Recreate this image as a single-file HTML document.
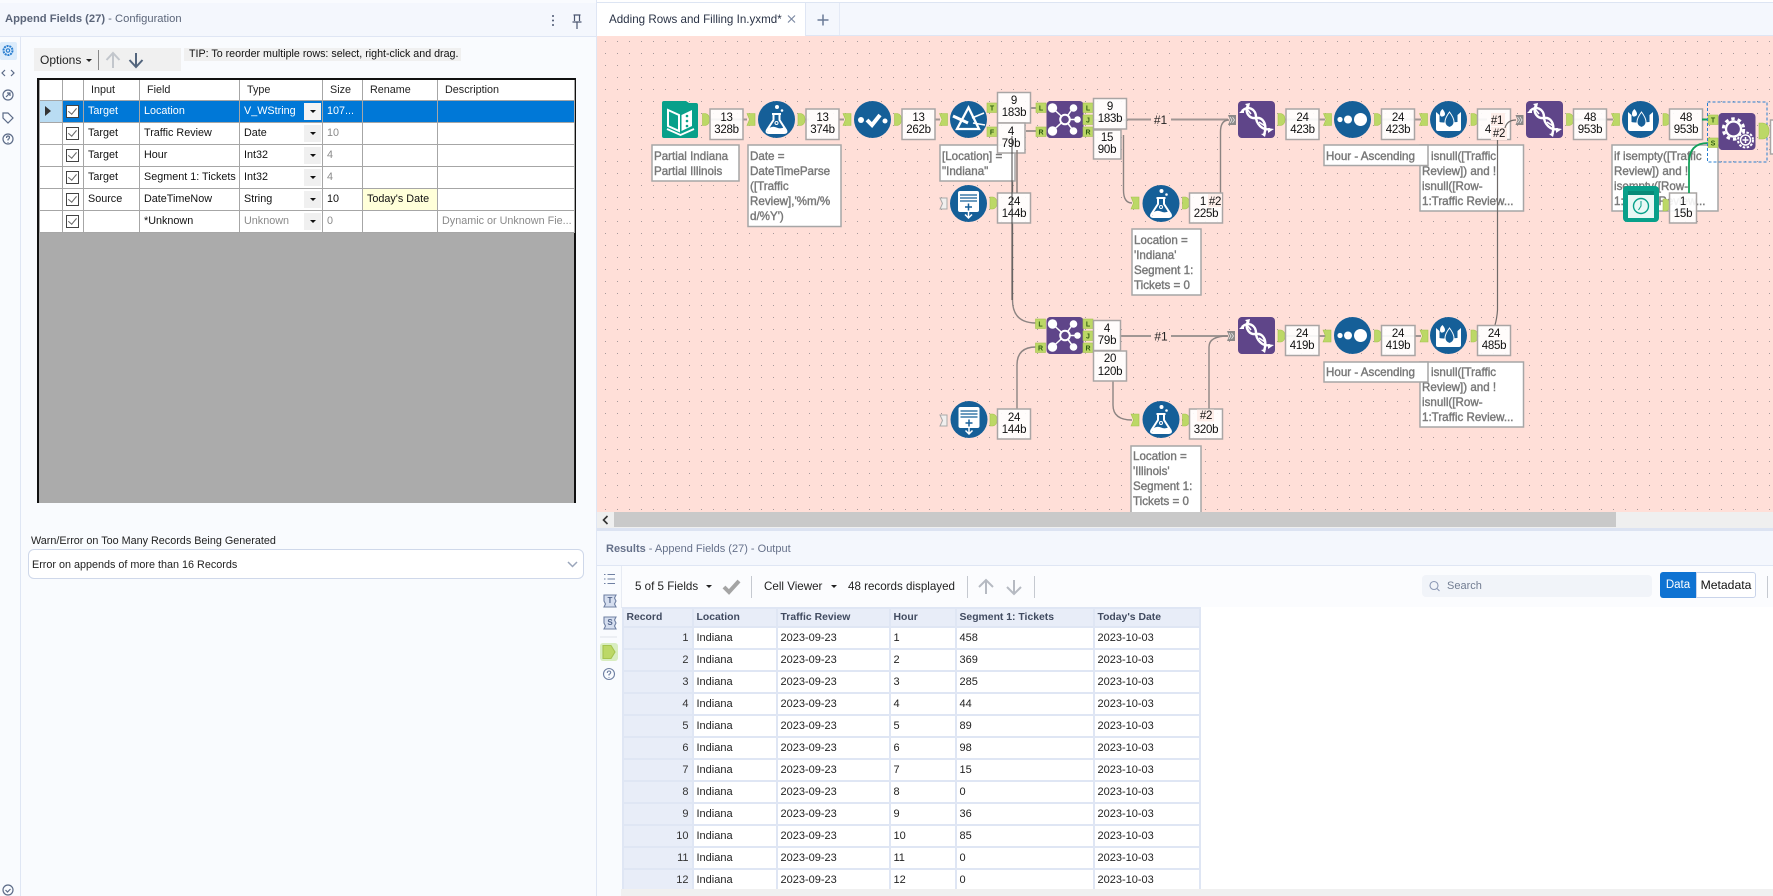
<!DOCTYPE html>
<html><head><meta charset="utf-8"><title>Append Fields</title>
<style>
html,body{margin:0;padding:0;width:1773px;height:896px;overflow:hidden;background:#fff;font-family:"Liberation Sans",sans-serif;color:#111}
.a{position:absolute}
#left{left:0;top:0;width:596px;height:896px;background:#f9fbfe}
#side{left:0;top:37px;width:20px;height:859px;background:#f9fbfe;border-right:1px solid #dfe6f4}
.hdr{background:#f4f7fd}
#grid{left:37px;top:78px;width:535px;height:423px;background:#ababab;border:1px solid #111;border-width:2px 2px 0 2px}
#grid table{border-collapse:collapse;table-layout:fixed;width:535px;font-size:10.8px}
#grid td{border:1px solid #a6a6a6;height:22px;padding:0 0 0 4px;background:#fff;white-space:nowrap;overflow:hidden;position:relative;box-sizing:border-box}
#grid tr.h td{height:20px;padding-left:7px;border-top:0;color:#222}
#grid tr.s td{background:#0078d7;color:#fff}
#grid td.g{color:#8a8a8a}
.cb{display:block;width:11px;height:11px;border:1px solid #444;background:#fff;margin-left:1px;position:relative}
.cb:after{content:"";position:absolute;left:3px;top:0;width:3.5px;height:7px;border:solid #666;border-width:0 1.2px 1.2px 0;transform:rotate(40deg)}
.dd{position:absolute;right:1px;top:2px;width:17px;height:17px;background:#f0f0f0}
.dd:after{content:"";position:absolute;left:6px;top:7px;border:3px solid transparent;border-top:3.5px solid #111}
#res table{border-collapse:collapse;table-layout:fixed;width:577px;font-size:11px}
#res td{border:2px solid #dfe6f4;height:22px;box-sizing:border-box;padding:0 0 0 3px;background:#fff;white-space:nowrap;color:#222}
#res tr.h td{height:19px;background:#e8edf8;font-weight:bold;color:#414b60;font-size:10.4px;padding-left:3px}
#res td.n{background:#e8edf8;text-align:right;padding-right:3px;color:#333}
svg text{font-family:"Liberation Sans",sans-serif}
.b{fill:#fff;fill-opacity:.9;stroke:#a9a5a4;stroke-width:1.5}
.t{font-size:11.5px;text-anchor:middle;fill:#111;letter-spacing:-.25px}
.n{fill:#fff;stroke:#a6a6a6;stroke-width:1.5}
.l{font-size:11.6px;fill:#787878;stroke:#787878;stroke-width:.4px}
.c{fill:none;stroke:#a09693;stroke-width:2}
.e{fill:none;stroke:#8c8482;stroke-width:1.4}
.d{fill:none;stroke:#6f6a68;stroke-width:1.2}
.k{font-size:7px;font-weight:bold;fill:#2f5d12;text-anchor:middle}
</style></head><body>

<div class="a" style="left:0;top:0;width:1773px;height:3px;background:#fff;border-bottom:1px solid #dde5f3;box-sizing:border-box"></div>
<div class="a" id="left"></div>
<div class="a hdr" style="left:0;top:3px;width:596px;height:33px;border-bottom:1px solid #dfe6f4"></div>
<div class="a" style="left:5px;top:13px;font-size:11.2px;color:#5b6579;white-space:nowrap"><b>Append Fields (27)</b> - Configuration</div>
<svg class="a" style="left:546px;top:12px" width="40" height="18"><g fill="#4a5670"><circle cx="7" cy="4" r="1"/><circle cx="7" cy="8.500" r="1"/><circle cx="7" cy="13" r="1"/></g><path d="M27.500 3h7M28.500 3v6M33.500 3v6M26.500 10h9M31 10v7" fill="none" stroke="#4a5670" stroke-width="1.200"/></svg>
<div class="a" style="left:596px;top:0;width:1px;height:896px;background:#dfe6f4"></div>

<div class="a" id="side"></div>
<div class="a" style="left:0;top:42px;width:17px;height:18px;background:#dcecfb;border-radius:2px"></div>
<svg class="a" style="left:0;top:40px" width="20" height="110" fill="none" stroke="#5c6b87" stroke-width="1.200">
<circle cx="8" cy="10.500" r="4.500" stroke="#2a7fd0" stroke-width="2" stroke-dasharray="2 .8"/><circle cx="8" cy="10.500" r="1.700" stroke="#2a7fd0"/>
<path d="M5 30l-3 3 3 3M11 30l3 3-3 3"/>
<circle cx="8" cy="55" r="5"/><path d="M6 57l4-4M7 53h3v3"/>
<path d="M3 73h5l5 5-5 5-5-5z"/>
<circle cx="8" cy="99" r="5"/><path d="M6.500 98q0-2 1.500-2t1.500 1.500q0 1-1.500 2v1M8 102v.8"/>
</svg>
<svg class="a" style="left:0;top:882px" width="20" height="14" fill="none" stroke="#5c6b87" stroke-width="1.200"><circle cx="8" cy="8" r="5"/><path d="M5.500 8l2 2 3-3"/></svg>

<div class="a" style="left:34px;top:48px;width:147px;height:23px;background:#f0f0f0"></div>
<div class="a" style="left:40px;top:53px;font-size:12px;color:#222">Options</div>
<div class="a" style="left:86px;top:59px;border:3px solid transparent;border-top:3.5px solid #222"></div>
<div class="a" style="left:98px;top:50px;width:1px;height:20px;background:#888"></div>
<svg class="a" style="left:104px;top:50px" width="42" height="20" fill="none" stroke-width="2"><path d="M9 18V4M2.500 10L9 3l6.500 7" stroke="#c2c6cc"/><path d="M32 3v14M25.500 10L32 17l6.500-7" stroke="#53657d"/></svg>
<div class="a" style="left:184px;top:48px;width:277px;height:13px;background:#f0f0f0;font-size:10.7px;line-height:13px;padding-left:5px;box-sizing:border-box;white-space:nowrap">TIP: To reorder multiple rows: select, right-click and drag.</div>

<div class="a" id="grid"><table>
<colgroup><col style="width:23px"><col style="width:21px"><col style="width:56px"><col style="width:100px"><col style="width:83px"><col style="width:40px"><col style="width:75px"><col style="width:137px"></colgroup>
<tr class="h"><td></td><td></td><td>Input</td><td>Field</td><td>Type</td><td>Size</td><td>Rename</td><td>Description</td></tr>
<tr class="s"><td style="background:#b9dcf3"><span style="display:block;width:0;height:0;border:5px solid transparent;border-left:6px solid #333;margin:0 0 0 1px"></span></td><td style="padding-left:2px"><span class="cb"></span></td><td>Target</td><td>Location</td><td>V_WString<span class="dd" style="background:#f4f4f4"></span></td><td>107...</td><td></td><td></td></tr>
<tr><td></td><td style="padding-left:2px"><span class="cb"></span></td><td>Target</td><td>Traffic Review</td><td>Date<span class="dd"></span></td><td class="g">10</td><td></td><td></td></tr>
<tr><td></td><td style="padding-left:2px"><span class="cb"></span></td><td>Target</td><td>Hour</td><td>Int32<span class="dd"></span></td><td class="g">4</td><td></td><td></td></tr>
<tr><td></td><td style="padding-left:2px"><span class="cb"></span></td><td>Target</td><td>Segment 1: Tickets</td><td>Int32<span class="dd"></span></td><td class="g">4</td><td></td><td></td></tr>
<tr><td></td><td style="padding-left:2px"><span class="cb"></span></td><td>Source</td><td>DateTimeNow</td><td>String<span class="dd"></span></td><td>10</td><td style="background:#ffffd9">Today's Date</td><td></td></tr>
<tr><td></td><td style="padding-left:2px"><span class="cb"></span></td><td></td><td>*Unknown</td><td class="g">Unknown<span class="dd"></span></td><td class="g">0</td><td></td><td class="g">Dynamic or Unknown Fie...</td></tr>
</table></div>

<div class="a" style="left:31px;top:535px;font-size:10.8px;color:#222;white-space:nowrap">Warn/Error on Too Many Records Being Generated</div>
<div class="a" style="left:28px;top:549px;width:556px;height:30px;background:#fff;border:1px solid #cfd8ea;border-radius:6px;box-sizing:border-box;font-size:10.8px;line-height:30px;padding-left:3px;color:#222">Error on appends of more than 16 Records</div>
<svg class="a" style="left:566px;top:560px" width="14" height="10" fill="none" stroke="#9aa6bb" stroke-width="1.500"><path d="M2 2l4.500 4.500L11 2"/></svg>

<!-- tab bar -->
<div class="a hdr" style="left:597px;top:3px;width:1176px;height:32.500px;border-bottom:1px solid #dfe6f4;box-sizing:border-box"></div>
<div class="a" style="left:597px;top:3px;width:209px;height:33px;background:#fff;border-right:1px solid #dfe6f4;box-sizing:border-box"></div>
<div class="a" style="left:839px;top:3px;width:1px;height:32px;background:#e4eaf6"></div>
<div class="a" style="left:609px;top:13px;font-size:11.600px;color:#2a3346;white-space:nowrap">Adding Rows and Filling In.yxmd*</div>
<svg class="a" style="left:786px;top:13px" width="50" height="14" fill="none" stroke="#7d8aa3" stroke-width="1.200"><path d="M2 2.500l7 7M9 2.500l-7 7"/><path d="M37 1.500v11M31.500 7h11" stroke-width="1.500" stroke="#6a7a96"/></svg>

<!-- canvas -->
<div class="a" style="left:597px;top:35.500px;width:1176px;height:476px;background-color:#ffdfd8"></div>

<svg class="a" style="left:0;top:0" width="1773" height="512" viewBox="0 0 1773 512">
<defs>
<pattern id="dots" x="5" y="5" width="12" height="12" patternUnits="userSpaceOnUse"><rect width="1" height="1" fill="#a5989a"/></pattern>
<path id="o" d="M0 0h3q4 1 4 6t-4 6H0z" fill="#bcd866" stroke="#a5c44f" stroke-width=".6"/>
<path id="i" d="M0 0h8v12H0l2.500-6z" fill="#bcd866" stroke="#a5c44f" stroke-width=".6"/>
<rect id="k" width="10" height="9.500" fill="#bcd866" stroke="#a5c44f" stroke-width=".6"/>
<g id="stub"><path d="M0 0h8v10H0l2-5z" fill="#8d8a89"/><path d="M2 2l2 3-2 3M4.500 2l2 3-2 3" fill="none" stroke="#e5e5e5" stroke-width=".8"/></g>
<path id="ls" d="M0 0h7v11H0l2.500-5.500z" fill="#f1efee" stroke="#a8a8a8"/>
<g id="flask"><circle cx="18.500" cy="18.500" r="18.500" fill="#155f98"/><path d="M15.500 13v6L9 29q-1.500 3 2 3h15q3.500 0 2-3l-6.500-10v-6M14 13h9" fill="none" stroke="#fff" stroke-width="2"/><path d="M10.500 27.500q4-3 8-1t8-.5l1.500 3q.5 2-1.500 2H11q-2 0-1.500-2z" fill="#fff"/><circle cx="19" cy="6" r="2" fill="#fff"/><circle cx="24" cy="9.500" r="1.300" fill="#fff"/><circle cx="18.500" cy="22" r="1.500" fill="none" stroke="#fff"/></g>
<g id="check"><circle cx="18.500" cy="18.500" r="18.500" fill="#155f98"/><circle cx="7" cy="19" r="3" fill="#fff"/><path d="M13 19l5 5 8-10" fill="none" stroke="#fff" stroke-width="4"/><circle cx="31" cy="20" r="2.500" fill="#fff"/></g>
<g id="filter"><circle cx="18.500" cy="18.500" r="18.500" fill="#155f98"/><path d="M18.500 6.500L29 28H7z" fill="none" stroke="#fff" stroke-width="2.300"/><path d="M3 15l15 7" stroke="#fff" stroke-width="3"/><path d="M22 17l12-5M23 22l12 2" stroke="#fff" stroke-width="1.600"/></g>
<g id="input"><circle cx="18.500" cy="18.500" r="18.500" fill="#155f98"/><rect x="8" y="6" width="21" height="21" rx="2" fill="#fff"/><path d="M10 10h17M10 13h17M10 16h17" stroke="#155f98" stroke-width="1.300"/><path d="M18.500 18.500v7M15 22h7" stroke="#155f98" stroke-width="1.500"/><path d="M18.500 26v7M15 29.500l3.500 3.500 3.500-3.500" fill="none" stroke="#fff" stroke-width="1.500"/></g>
<g id="join"><rect width="37" height="37" rx="4" fill="#5f4589"/><path d="M18.500 18.500L6 7M18.500 18.500L6 30M18.500 18.500L27 6M18.500 18.500h13M18.500 18.500L27 30" stroke="#fff" stroke-width="1.500"/><circle cx="18.500" cy="18.500" r="4.800" fill="#5f4589" stroke="#fff" stroke-width="2"/><circle cx="6" cy="7" r="4.700" fill="#fff"/><circle cx="6" cy="30" r="4.700" fill="#fff"/><circle cx="27" cy="7" r="3.800" fill="#fff"/><circle cx="31" cy="18.500" r="3.300" fill="#fff"/><circle cx="27" cy="30" r="3.800" fill="#fff"/></g>
<g id="dna"><rect width="37" height="37" rx="4" fill="#5f4589"/><path d="M4 10C10 4 18 8 18 16C18 22 24 30 32 28" fill="none" stroke="#fff" stroke-width="2.400"/><path d="M10 4C6 12 12 18 18 17C24 16 30 22 26 34" fill="none" stroke="#fff" stroke-width="2.400"/><path d="M9 8L13 13M21 21L27 25" stroke="#fff" stroke-width="1.600"/><path d="M1 12l5-5v5zM36 28l-6 4v-5zM7 3l5-1-1 5zM27 36l-4-3 5-1z" fill="#fff"/></g>
<g id="sort"><circle cx="18.500" cy="18.500" r="18.500" fill="#155f98"/><circle cx="6" cy="18.500" r="2.600" fill="#fff"/><circle cx="14" cy="18.500" r="4" fill="#fff"/><circle cx="26.500" cy="18.500" r="6.500" fill="#fff"/></g>
<g id="water"><circle cx="18.500" cy="18.500" r="18.500" fill="#155f98"/><path d="M6 11l3.500 3v7q3 1 18 0v-7l3.500-3v17q0 2-2 2H8q-2 0-2-2z" fill="#fff"/><path d="M19.500 11q4.500 6 4.500 10t-4.500 5.500Q15 25 15 21t4.500-10z" fill="#155f98" stroke="#fff" stroke-width="1"/><path d="M12.500 8q2.500 3 2.500 5t-2.500 2.500T10 13t2.500-5z" fill="#fff"/></g>
<g id="append"><rect width="37" height="37" rx="4" fill="#5f4589"/><circle cx="15" cy="16" r="10.200" fill="none" stroke="#fff" stroke-width="3" stroke-dasharray="3.500 3"/><circle cx="15" cy="16" r="7.500" fill="none" stroke="#fff" stroke-width="2.300"/><circle cx="27" cy="27" r="7.500" fill="#5f4589" stroke="#fff" stroke-width="2" stroke-dasharray="2.500 1.500"/><circle cx="27" cy="27" r="5" fill="none" stroke="#fff" stroke-width="1.500"/><path d="M27 24v6M24 27h6" stroke="#fff" stroke-width="1.500"/></g>
<g id="book"><path d="M2 0h22l3 2h7q2 0 2 2v31q0 2-2 2H2q-2 0-2-2V2q0-2 2-2z" fill="#08a08a"/><path d="M6 9l11 5v16L6 25z" fill="none" stroke="#fff" stroke-width="2"/><path d="M19.500 14L30 9v16l-10.500 5z" fill="#fff"/><circle cx="25" cy="15" r="1.300" fill="#08a08a"/><circle cx="25" cy="20" r="1.300" fill="#08a08a"/><circle cx="25" cy="25" r="1.300" fill="#08a08a"/><path d="M5 28l13.500 6L32 28" fill="none" stroke="#fff" stroke-width="1.800"/></g>
<g id="clock"><rect width="36" height="36" rx="4" fill="#08a08a"/><rect x="5" y="5" width="26" height="27" fill="#e9f8f5"/><rect x="5" y="5" width="26" height="4" fill="#078a78"/><circle cx="18" cy="20" r="7.500" fill="none" stroke="#08a08a" stroke-width="1.400"/><path d="M18 15v5l-2.500 4" fill="none" stroke="#08a08a"/></g>
</defs>
<rect x="597" y="36" width="1176" height="476" fill="url(#dots)"/>

<!-- connections -->
<path class="c" d="M709 119.500h38M839 119.500h5M805 119.500h4M934 119.500h6M1030 108h7M1026 131h10M1093 120h35M1127 119.500h24M1171 119.500h57M1285 119.500h40M1381 119.500h40M1477 119.500h10M1573 119.500h40M1119 336h32M1171 336h57M1285 336h40M1381 336h40M1477 336h3M990 203h8M1182 203h8M1182 420h8"/>
<path class="e" d="M1123.500 135V190Q1123.500 203 1132 203"/>
<path class="e" d="M1113 381V405Q1113 420 1132 420"/>
<path class="e" d="M1017 409V365Q1017 347 1036 347"/>
<path class="e" d="M1209 409V347Q1209 336 1228 336"/>
<path class="e" d="M1012.500 150V300Q1012.500 323 1036 323"/>
<path class="e" d="M1220.500 193V132Q1220.500 120 1229 120"/>

<!-- annotations -->
<rect class="n" x="652" y="145" width="87" height="36"/>
<text class="l" x="654" y="160">Partial Indiana</text><text class="l" x="654" y="175">Partial Illinois</text>
<rect class="n" x="748" y="145" width="93" height="81.500"/>
<text class="l" x="750" y="160">Date =</text><text class="l" x="750" y="175">DateTimeParse</text><text class="l" x="750" y="190">([Traffic</text><text class="l" x="750" y="205">Review],'%m/%</text><text class="l" x="750" y="220">d/%Y')</text>
<rect class="n" x="940" y="145" width="75" height="36"/>
<text class="l" x="942" y="160">[Location] =</text><text class="l" x="942" y="175">"Indiana"</text>
<rect class="n" x="1132" y="229" width="69" height="66"/>
<text class="l" x="1134" y="244">Location =</text><text class="l" x="1134" y="259">'Indiana'</text><text class="l" x="1134" y="274">Segment 1:</text><text class="l" x="1134" y="289">Tickets = 0</text>
<rect class="n" x="1131" y="446" width="70" height="70"/>
<text class="l" x="1133" y="460">Location =</text><text class="l" x="1133" y="475">'Illinois'</text><text class="l" x="1133" y="490">Segment 1:</text><text class="l" x="1133" y="505">Tickets = 0</text>
<rect class="n" x="1420" y="145" width="103.500" height="66"/>
<text class="l" x="1422" y="160">if isnull([Traffic</text><text class="l" x="1422" y="175">Review]) and !</text><text class="l" x="1422" y="190">isnull([Row-</text><text class="l" x="1422" y="205">1:Traffic Review...</text>
<rect class="n" x="1324" y="145" width="104" height="20.500"/><text class="l" x="1326" y="160">Hour - Ascending</text>
<rect class="n" x="1420" y="362" width="103.500" height="65"/>
<text class="l" x="1422" y="376">if isnull([Traffic</text><text class="l" x="1422" y="391">Review]) and !</text><text class="l" x="1422" y="406">isnull([Row-</text><text class="l" x="1422" y="421">1:Traffic Review...</text>
<rect class="n" x="1324" y="362" width="104" height="20"/><text class="l" x="1326" y="376">Hour - Ascending</text>
<rect class="n" x="1612" y="145" width="106" height="66"/>
<text class="l" x="1614" y="160">if isempty([Traffic</text><text class="l" x="1614" y="175">Review]) and !</text><text class="l" x="1614" y="190">isempty([Row-</text><text class="l" x="1614" y="205">1:Traffic Review...</text>

<!-- row 1 -->
<use href="#book" x="662" y="101"/><use href="#o" x="702.500" y="113.500"/>
<rect class="b" x="710" y="109" width="33" height="30.500"/><text class="t" x="726.500" y="121">13</text><text class="t" x="726.500" y="133">328b</text>
<use href="#i" x="747" y="113.500"/><use href="#flask" x="758" y="101"/><use href="#o" x="798" y="113.500"/>
<rect class="b" x="806" y="109" width="33" height="30.500"/><text class="t" x="822.500" y="121">13</text><text class="t" x="822.500" y="133">374b</text>
<use href="#i" x="843" y="113.500"/><use href="#check" x="854" y="101"/><use href="#o" x="894.500" y="113.500"/>
<rect class="b" x="902" y="109" width="33" height="30.500"/><text class="t" x="918.500" y="121">13</text><text class="t" x="918.500" y="133">262b</text>
<use href="#i" x="939.500" y="113.500"/><use href="#filter" x="950" y="101"/>
<use href="#k" x="987" y="103"/><text class="k" x="992" y="110.500">T</text>
<use href="#k" x="987" y="127"/><text class="k" x="992" y="134.500">F</text>
<rect class="b" x="997.500" y="92.500" width="33" height="30.500"/><text class="t" x="1014" y="104">9</text><text class="t" x="1014" y="116">183b</text>
<rect class="b" x="997.500" y="123" width="27.500" height="30"/><text class="t" x="1011" y="135">4</text><text class="t" x="1011" y="147">79b</text>
<use href="#k" x="1036" y="103"/><text class="k" x="1041" y="110.500">L</text>
<use href="#k" x="1036" y="127"/><text class="k" x="1041" y="134.500">R</text>
<use href="#join" x="1046.500" y="101"/>
<use href="#k" x="1083" y="103"/><text class="k" x="1088" y="110.500">L</text>
<use href="#k" x="1083" y="115"/><text class="k" x="1088" y="122.500">J</text>
<use href="#k" x="1083" y="127"/><text class="k" x="1088" y="134.500">R</text>
<rect class="b" x="1093.500" y="98.500" width="33" height="30.500"/><text class="t" x="1110" y="110">9</text><text class="t" x="1110" y="122">183b</text>
<rect class="b" x="1093.500" y="130" width="27.500" height="29"/><text class="t" x="1107" y="141">15</text><text class="t" x="1107" y="153">90b</text>
<text x="1160.500" y="124" font-size="12" text-anchor="middle" fill="#222">#1</text>
<!-- row 2 filter -->
<use href="#ls" x="940" y="198"/><use href="#input" x="950" y="185"/><use href="#o" x="990" y="197"/>
<rect class="b" x="997.500" y="193" width="33" height="30"/><text class="t" x="1014" y="205">24</text><text class="t" x="1014" y="217">144b</text>
<path d="M1012 136V300" fill="none" stroke="#444" stroke-width="1"/><path d="M1017 150V193" fill="none" stroke="#8a807d" stroke-width="1.500"/>
<use href="#i" x="1131" y="197"/><use href="#flask" x="1142.500" y="185"/><use href="#o" x="1182.500" y="197"/>
<rect class="b" x="1189.500" y="193" width="33" height="30"/><text class="t" x="1203" y="205">1</text><rect x="1208" y="194" width="14" height="13" fill="#fdeee9"/><text class="t" x="1215" y="205">#2</text><text class="t" x="1206" y="217">225b</text>
<use href="#stub" x="1228" y="115"/><use href="#dna" x="1238" y="101"/><use href="#o" x="1278" y="113.500"/>
<rect class="b" x="1286" y="109" width="33" height="30.500"/><text class="t" x="1302.500" y="121">24</text><text class="t" x="1302.500" y="133">423b</text>
<use href="#i" x="1323.500" y="113.500"/><use href="#sort" x="1334" y="101"/><use href="#o" x="1374.500" y="113.500"/>
<rect class="b" x="1381.500" y="109" width="33" height="30.500"/><text class="t" x="1398" y="121">24</text><text class="t" x="1398" y="133">423b</text>
<use href="#i" x="1419.500" y="113.500"/><use href="#water" x="1430" y="101"/><use href="#o" x="1471" y="113.500"/>
<rect class="b" x="1477.500" y="109" width="33" height="30.500"/><text class="t" x="1488" y="133">4</text>
<rect x="1491" y="113" width="14" height="13" fill="#fdeee9"/><rect x="1491" y="127" width="16" height="13" fill="#fdeee9"/>
<text class="t" x="1497" y="124">#1</text><text class="t" x="1499" y="137">#2</text>
<path d="M1505 128Q1507 120 1516 120" class="d"/>
<path d="M1497.500 140V310Q1497 318 1495 325" class="d"/>
<use href="#stub" x="1515.500" y="115"/><use href="#dna" x="1526" y="101"/><use href="#o" x="1566.500" y="113.500"/>
<rect class="b" x="1573.500" y="109" width="33" height="30.500"/><text class="t" x="1590" y="121">48</text><text class="t" x="1590" y="133">953b</text>
<use href="#i" x="1611.500" y="113.500"/><use href="#water" x="1622" y="101"/><use href="#o" x="1663" y="113.500"/>
<rect class="b" x="1669.500" y="109" width="33" height="30.500"/><text class="t" x="1686" y="121">48</text><text class="t" x="1686" y="133">953b</text>
<path d="M1702 119.500h7" stroke="#12a05a" stroke-width="2"/>
<use href="#clock" x="1623" y="186"/><use href="#o" x="1663" y="199"/>
<rect class="b" x="1669.500" y="193" width="27" height="30"/><text class="t" x="1683" y="205">1</text><text class="t" x="1683" y="217">15b</text>
<path d="M1689 193V163Q1689 143 1708 143" fill="none" stroke="#12a05a" stroke-width="1.800"/>
<use href="#k" x="1708" y="115"/><text class="k" x="1713" y="122.500">T</text>
<use href="#k" x="1708" y="138"/><text class="k" x="1713" y="145.500">S</text>
<use href="#append" x="1718.500" y="113"/>
<rect x="1707.500" y="102" width="59.500" height="60" fill="none" stroke="#2a7fd0" stroke-dasharray="3 2"/>
<path d="M1759 123h4q6 1 6 8t-6 8h-4z" fill="#bcd866" stroke="#a5c44f" stroke-width=".6"/>
<rect class="b" x="1770.500" y="120" width="10" height="34"/>

<!-- row 3 lower -->
<use href="#k" x="1035.500" y="319"/><text class="k" x="1040.500" y="326.500">L</text>
<use href="#k" x="1035.500" y="343"/><text class="k" x="1040.500" y="350.500">R</text>
<use href="#join" x="1046.500" y="317"/>
<use href="#k" x="1083" y="319"/><text class="k" x="1088" y="326.500">L</text>
<use href="#k" x="1083" y="331"/><text class="k" x="1088" y="338.500">J</text>
<use href="#k" x="1083" y="343"/><text class="k" x="1088" y="350.500">R</text>
<rect class="b" x="1093.500" y="320.500" width="27" height="30"/><text class="t" x="1107" y="332">4</text><text class="t" x="1107" y="344">79b</text>
<rect class="b" x="1093.500" y="351" width="33" height="30"/><text class="t" x="1110" y="362">20</text><text class="t" x="1110" y="375">120b</text>
<text x="1161" y="340.500" font-size="12" text-anchor="middle" fill="#222">#1</text>
<use href="#stub" x="1227" y="331"/><use href="#dna" x="1238" y="317"/><use href="#o" x="1278" y="330"/>
<rect class="b" x="1285.500" y="325.500" width="33.500" height="30"/><text class="t" x="1302" y="337">24</text><text class="t" x="1302" y="349">419b</text>
<use href="#i" x="1323" y="330"/><use href="#sort" x="1334" y="317"/><use href="#o" x="1374.500" y="330"/>
<rect class="b" x="1381.500" y="325.500" width="33.500" height="30"/><text class="t" x="1398" y="337">24</text><text class="t" x="1398" y="349">419b</text>
<use href="#i" x="1420" y="330"/><use href="#water" x="1430" y="317"/><use href="#o" x="1471" y="330"/>
<rect class="b" x="1477.500" y="325.500" width="33" height="30"/><text class="t" x="1494" y="337">24</text><text class="t" x="1494" y="349">485b</text>
<!-- row 4 -->
<use href="#ls" x="940" y="415"/><use href="#input" x="950.500" y="401"/><use href="#o" x="990" y="414"/>
<rect class="b" x="997.500" y="409" width="33" height="30"/><text class="t" x="1014" y="421">24</text><text class="t" x="1014" y="433">144b</text>
<use href="#i" x="1131" y="414"/><use href="#flask" x="1142.500" y="401"/><use href="#o" x="1182.500" y="414"/>
<rect class="b" x="1189.500" y="409" width="33" height="30"/><rect x="1197" y="409.500" width="17" height="12" fill="#fdeee9"/><text class="t" x="1206" y="419">#2</text><text class="t" x="1206" y="433">320b</text>
</svg>

<!-- scrollbar -->
<div class="a" style="left:597px;top:512px;width:1176px;height:16px;background:#efefef"></div>
<div class="a" style="left:614px;top:512px;width:1002px;height:15px;background:#c9c9c9"></div>
<svg class="a" style="left:601px;top:515px" width="10" height="10" fill="none" stroke="#333" stroke-width="1.600"><path d="M6.500 1L2.500 5l4 4"/></svg>
<div class="a" style="left:597px;top:528px;width:1176px;height:3px;background:#dce3f2"></div>

<!-- results -->
<div class="a" style="left:597px;top:531px;width:1176px;height:365px;background:#f9fbfe"></div>
<div class="a hdr" style="left:597px;top:531px;width:1176px;height:34px;border-bottom:1px solid #dfe6f4"></div>
<div class="a" style="left:606px;top:543px;font-size:11px;color:#66718a;white-space:nowrap"><b>Results</b> - Append Fields (27) - Output</div>
<div class="a" style="left:621px;top:566px;width:1152px;height:42px;background:#fbfcfe;border-bottom:1px solid #e7ebf3;border-left:1px solid #e7ebf3;box-sizing:border-box"></div>
<div class="a" style="left:635px;top:580px;font-size:11.600px;color:#222;white-space:nowrap">5 of 5 Fields</div>
<div class="a" style="left:706px;top:585px;border:3px solid transparent;border-top:3.500px solid #222"></div>
<svg class="a" style="left:722px;top:578px" width="20" height="18"><path d="M2 9l5 5L17 3" fill="none" stroke="#a4a4a4" stroke-width="4"/></svg>
<div class="a" style="left:751px;top:576px;width:1px;height:22px;background:#c5c9d0"></div>
<div class="a" style="left:764px;top:580px;font-size:11.600px;color:#222;white-space:nowrap">Cell Viewer</div>
<div class="a" style="left:831px;top:585px;border:3px solid transparent;border-top:3.500px solid #222"></div>
<div class="a" style="left:848px;top:580px;font-size:11.600px;color:#222;white-space:nowrap">48 records displayed</div>
<div class="a" style="left:967px;top:576px;width:1px;height:22px;background:#c5c9d0"></div>
<svg class="a" style="left:976px;top:578px" width="50" height="18" fill="none" stroke="#b6bac2" stroke-width="2"><path d="M10 16V2M3 9l7-7 7 7M38 2v14M31 9l7 7 7-7"/></svg>
<div class="a" style="left:1034px;top:576px;width:1px;height:22px;background:#c5c9d0"></div>
<div class="a" style="left:1422px;top:575px;width:230px;height:22px;background:#f1f4f9;border-radius:4px;font-size:11px;line-height:22px;padding-left:25px;box-sizing:border-box;color:#727d92">Search</div>
<svg class="a" style="left:1428px;top:580px" width="14" height="14" fill="none" stroke="#8c99b5" stroke-width="1.100"><circle cx="6" cy="5.500" r="4"/><path d="M9 8.500l2.500 2.500"/></svg>
<div class="a" style="left:1660px;top:572px;width:36px;height:26px;background:#0f73d2;border-radius:3px 0 0 3px;color:#fff;font-size:11.5px;line-height:26px;text-align:center">Data</div>
<div class="a" style="left:1696px;top:572px;width:60px;height:26px;background:#fff;border:1px solid #c9d4ea;box-sizing:border-box;border-radius:0 3px 3px 0;font-size:12.2px;line-height:24px;text-align:center;color:#111">Metadata</div>
<div class="a" style="left:1767px;top:576px;width:1px;height:22px;background:#c5c9d0"></div>

<div class="a" style="left:600px;top:643px;width:18px;height:18px;background:#d8edc0;border-radius:3px"></div>
<svg class="a" style="left:597px;top:568px" width="24" height="120" fill="none" stroke="#6f80a3" stroke-width="1.100">
<path d="M10.500 6.500h7.500M10.500 11h7.500M10.500 15.500h7.500"/><path d="M7 6.500h1.500M7 11h1.500M7 15.500h1.500"/>
<path d="M7 27h12l-1.500 3 1.500 3-1.500 3 1.500 3H7l1.500-3L7 33z" fill="#d5deef"/>
<path d="M7 49h12l-1.500 3 1.500 3-1.500 3 1.500 3H7l1.500-3L7 55z" fill="#d5deef"/>
<path d="M3 69h17" stroke="#dfe3ea"/>
<path d="M6 77.500h8l4 6.500-4 6.500H6z" fill="#bcd866" stroke="#a5c44f"/>
<circle cx="12" cy="106" r="5.500"/><path d="M10.300 105q0-2 1.700-2t1.700 1.500q0 1-1.700 2v1M12 109v.8"/>
</svg>
<div class="a" style="left:604px;top:596px;width:12px;text-align:center;font-size:8px;font-weight:bold;color:#52648a">T</div>
<div class="a" style="left:604px;top:618px;width:12px;text-align:center;font-size:8px;font-weight:bold;color:#52648a">S</div>

<div class="a" id="res" style="left:621.500px;top:607px;height:282px;overflow:hidden;background:#fff;width:1151px"><table>
<colgroup><col style="width:70px"><col style="width:84px"><col style="width:113px"><col style="width:66px"><col style="width:138px"><col style="width:106px"></colgroup>
<tr class="h"><td>Record</td><td>Location</td><td>Traffic Review</td><td>Hour</td><td>Segment 1: Tickets</td><td>Today's Date</td></tr>
<tr><td class="n">1</td><td>Indiana</td><td>2023-09-23</td><td>1</td><td>458</td><td>2023-10-03</td></tr>
<tr><td class="n">2</td><td>Indiana</td><td>2023-09-23</td><td>2</td><td>369</td><td>2023-10-03</td></tr>
<tr><td class="n">3</td><td>Indiana</td><td>2023-09-23</td><td>3</td><td>285</td><td>2023-10-03</td></tr>
<tr><td class="n">4</td><td>Indiana</td><td>2023-09-23</td><td>4</td><td>44</td><td>2023-10-03</td></tr>
<tr><td class="n">5</td><td>Indiana</td><td>2023-09-23</td><td>5</td><td>89</td><td>2023-10-03</td></tr>
<tr><td class="n">6</td><td>Indiana</td><td>2023-09-23</td><td>6</td><td>98</td><td>2023-10-03</td></tr>
<tr><td class="n">7</td><td>Indiana</td><td>2023-09-23</td><td>7</td><td>15</td><td>2023-10-03</td></tr>
<tr><td class="n">8</td><td>Indiana</td><td>2023-09-23</td><td>8</td><td>0</td><td>2023-10-03</td></tr>
<tr><td class="n">9</td><td>Indiana</td><td>2023-09-23</td><td>9</td><td>36</td><td>2023-10-03</td></tr>
<tr><td class="n">10</td><td>Indiana</td><td>2023-09-23</td><td>10</td><td>85</td><td>2023-10-03</td></tr>
<tr><td class="n">11</td><td>Indiana</td><td>2023-09-23</td><td>11</td><td>0</td><td>2023-10-03</td></tr>
<tr><td class="n">12</td><td>Indiana</td><td>2023-09-23</td><td>12</td><td>0</td><td>2023-10-03</td></tr>
</table></div>
<div class="a" style="left:621px;top:889px;width:1152px;height:7px;background:#f0f0f0"></div>
</body></html>
